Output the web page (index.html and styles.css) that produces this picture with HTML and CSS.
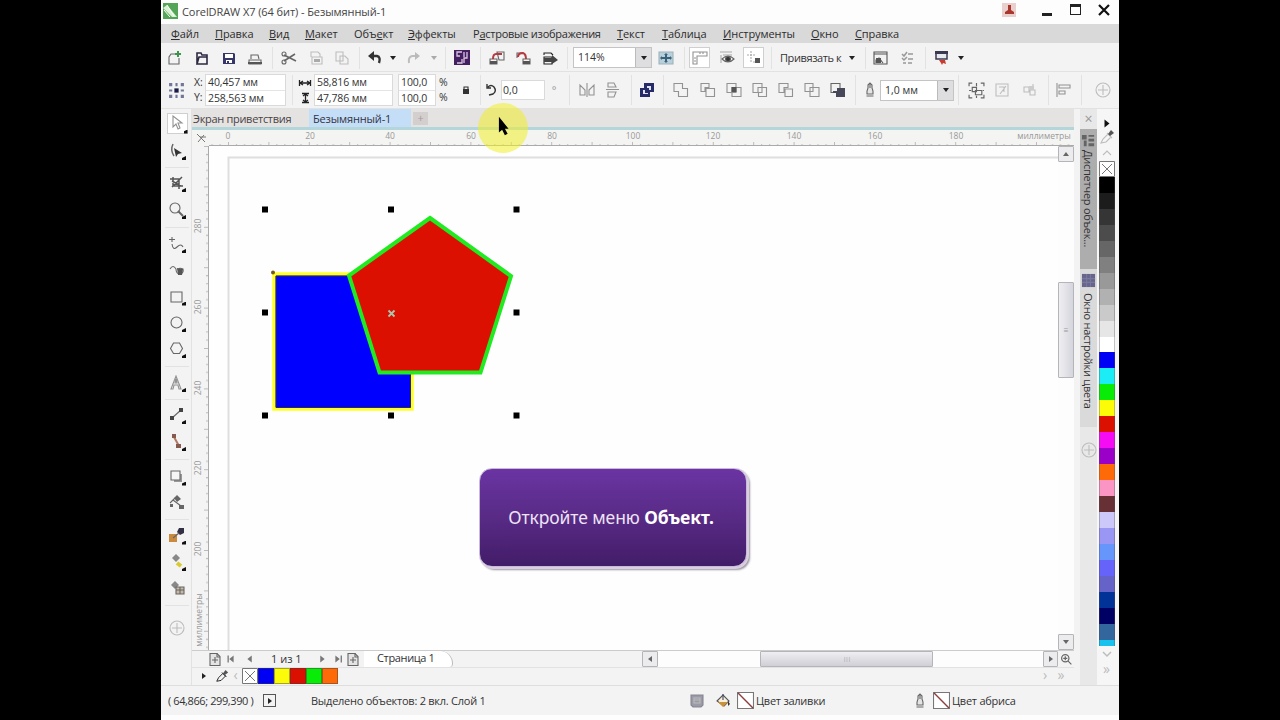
FILE: index.html
```html
<!DOCTYPE html>
<html lang="ru">
<head>
<meta charset="utf-8">
<title>CorelDRAW X7 (64 бит) - Безымянный-1</title>
<link rel="stylesheet" href="styles.css">
</head>
<body>
<svg class="defs" aria-hidden="true">
  <defs>
  <symbol id="weld" viewBox="0 0 16 16"><path d="M1 1.500h8.500v5h5v8h-9v-5h-4.500z"/></symbol>
  <symbol id="trim" viewBox="0 0 16 16"><path d="M1 1.500h8v4h-4v4h-4zM6 6.500h8.500v8h-8.500z"/></symbol>
  <symbol id="intersect" viewBox="0 0 16 16"><path d="M1 1.500h9v9h-9zM6 5.500h9v9h-9z"/><path class="dark" d="M5.500 5h5v5h-5z"/></symbol>
  <symbol id="simplify" viewBox="0 0 16 16"><path d="M1 1.500h9v4h4.500v9h-8v-4h-5.500zM6 5.500h4v5h-4z"/></symbol>
  <symbol id="front" viewBox="0 0 16 16"><path d="M1 1.500h9v4h-4v5h-5zM7 7h7.500v7.500h-7.500z"/></symbol>
  <symbol id="plus" viewBox="0 0 16 16"><circle cx="8" cy="8" r="7"/><path d="M8 3v10M3 8h10"/></symbol>
  <symbol id="pen" viewBox="0 0 16 16"><path class="lite" d="M6 3l2-2 2 2v3l1 3v3h-6v-3l1-3z"/><path d="M4.500 14h7M8 1v5"/></symbol>
  <symbol id="page" viewBox="0 0 16 16"><path class="lite" d="M3 2.500h7l3 3v9h-10z"/><path d="M8 6v6M5 9h6M10 2v4h3"/></symbol>
  <symbol id="dropper" viewBox="0 0 16 16"><path d="M2 14l2-4 5-5 3 3-5 5zM8 4l5 5"/><path class="dark" d="M9 5l3-4 3 3-4 3z"/></symbol>
  <symbol id="poly" viewBox="0 0 16 16"><path d="M4.500 2h6l3 5.500-3 5h-6l-3-5z"/></symbol>
  </defs>
</svg>
<div class="window">
  <header class="titlebar">
    <svg class="logo" viewBox="0 0 16 16"><path fill="#54a557" d="M1 0h15v16h-15z"/><path fill="#d9f2d2" d="M1 5l4-3 10 12h-5z"/><path stroke="#fff" d="M2 7l6 7M5 2l7 11"/></svg>
    <span class="caption">CorelDRAW X7 (64 бит) - Безымянный-1</span>
    <svg class="account" viewBox="0 0 16 16"><path fill="#ead0cc" d="M1 1h14v14h-14z"/><path fill="#aa372d" d="M7 3h3v5l3 2v2h-9v-2l3-2z"/></svg>
    <svg class="winbtns" viewBox="0 0 72 16"><path fill="#222" d="M1 11h10v3h-10zM29 2h11v11h-11zM30 5v7h9v-7z" fill-rule="evenodd"/><path d="M58 3l10 10M68 3l-10 10" stroke="#111" stroke-width="2.200"/></svg>
  </header>

  <nav class="menubar">
    <span><u>Ф</u>айл</span><span><u>П</u>равка</span><span><u>В</u>ид</span><span><u>М</u>акет</span><span>Объ<u>е</u>кт</span><span><u>Э</u>ффекты</span><span class="tight">Р<u>а</u>стровые изображения</span><span><u>Т</u>екст</span><span><u>Т</u>аблица</span><span><u>И</u>нструменты</span><span><u>О</u>кно</span><span><u>С</u>правка</span>
  </nav>

  <div class="toolbar standard">
    <svg class="ic" viewBox="0 0 16 16"><path d="M8 4h-4l-2 3v7h10v-6"/><path d="M11 1v6M8 4h6" stroke="#3c9548" stroke-width="2"/></svg>
    <svg class="ic deep" viewBox="0 0 16 16"><path d="M3 14v-11h4l1 2h5v2M3 14h10v-7h-8z"/></svg>
    <svg class="ic" viewBox="0 0 16 16"><path fill="#37366a" d="M2 3h11l1 1v10h-12z"/><path fill="#fff" d="M4 4h8v4h-8zM5 10h6v3h-6z"/><path fill="#37366a" d="M6 11h2v3h-2z"/></svg>
    <svg class="ic" viewBox="0 0 16 16"><path d="M4 9v-4h7l1 4M2 10h12v4h-12z"/><path class="dark" d="M1 12h14v2h-14z"/></svg>
    <i class="sep"></i>
    <svg class="ic" viewBox="0 0 16 16"><path d="M3 5l12 6M3 11l11-7" stroke-width="1.600"/><circle cx="3" cy="4" r="2"/><circle cx="3" cy="12" r="2"/></svg>
    <svg class="ic pale" viewBox="0 0 16 16"><path d="M3 7v-5h7l2 2v3M4 7h10v7h-10z"/><path d="M6 9h6v3h-6z" fill="#aaa"/></svg>
    <svg class="ic pale" viewBox="0 0 16 16"><path d="M2 2h7v9h-7zM6 6h5l3 3v5h-8z"/></svg>
    <i class="sep"></i>
    <svg class="ic" viewBox="0 0 16 16"><path d="M4 6h6q4 1 2 7" stroke="#333" stroke-width="2.400"/><path fill="#333" d="M1 6l6-5v10z"/></svg>
    <i class="down"></i>
    <svg class="ic pale" viewBox="0 0 16 16"><path d="M12 6h-6q-4 1-3 7" stroke-width="2"/><path fill="#bbb" d="M14 6l-5-4v8z"/></svg>
    <i class="down faint"></i>
    <i class="sep"></i>
    <svg class="ic" viewBox="0 0 16 16"><path fill="#452060" d="M0 0h16v15h-16z"/><path d="M8 2h-5v4h3M8 9v4h-5M10 2v5M13 2v6h-3v5" stroke="#d9c7e6" stroke-width="1.300"/></svg>
    <i class="sep"></i>
    <svg class="ic" viewBox="0 0 16 16"><path d="M1 9h7v5h-7zM8 2h7v8h-5z"/><path d="M13 4h-6q-3 0-3 5" stroke="#b53a42" stroke-width="2"/><path class="dark" d="M1 11h7v3h-7z"/></svg>
    <svg class="ic" viewBox="0 0 16 16"><path d="M2 8v-5h6M8 9h7v5h-7z"/><path d="M3 7q0-4 5-4 3 1 3 6" stroke="#b53a42" stroke-width="2"/><path class="dark" d="M8 11h7v3h-7z"/></svg>
    <svg class="ic" viewBox="0 0 16 16"><path d="M2 5v-2h7l2 2M2 7h8v7h-8z" stroke="#222"/><path fill="#444" d="M2 8h8v-3l6 5-6 4v-2h-8z"/></svg>
    <i class="sep"></i>
    <span class="combo"><b>114%</b><em><i class="down"></i></em></span>
    <svg class="ic" viewBox="0 0 16 16"><path fill="#b8d0db" stroke="#9fb3bb" d="M1 2h14v12h-14z"/><path fill="#3a6278" d="M8 3l2 2h-1v2h3v-1l2 2-2 2v-1h-3v2h1l-2 2-2-2h1v-2h-3v1l-2-2 2-2v1h3v-2h-1z"/></svg>
    <i class="sep"></i>
    <span class="toggle"><svg class="ic mid" viewBox="0 0 16 16"><path d="M1 14v-12h14v4h-10v8zM8 2v2M11 2v2M2 8h2M2 11h2"/></svg></span>
    <svg class="ic" viewBox="0 0 16 16"><path d="M1 2h12M2 5v8M4 5h9" stroke="#aaa"/><path d="M3 9q6-6 12 0-6 6-12 0z"/><circle cx="9" cy="9" r="2.500" fill="#333"/></svg>
    <span class="toggle"><svg class="ic" viewBox="0 0 16 16"><path d="M5 1v12M1 5h9M7 12h6" stroke="#aaa" stroke-dasharray="2 1"/><path class="dark" d="M9 8h5v5h-5z"/></svg></span>
    <i class="sep"></i>
    <span class="snap">Привязать к</span>
    <i class="down"></i>
    <i class="sep"></i>
    <svg class="ic" viewBox="0 0 16 16"><path d="M1 2h13v12h-13zM1 4h13M3 13v-3l3-2 4 5" stroke="#555"/><path class="dark" d="M3 8h5v5h-5z"/></svg>
    <svg class="ic" viewBox="0 0 16 16"><path d="M2 4l2 2 3-4M8 4h5M2 8l2 2 3-3M8 9h5M3 13h3M8 13h4" stroke="#999" stroke-width="1.500"/></svg>
    <i class="sep"></i>
    <svg class="ic" viewBox="0 0 16 16"><path fill="#e8e8f0" stroke="#3b3850" stroke-width="1.500" d="M2 2h11v7h-11z"/><path fill="#3b3850" d="M1 1h13v3h-13z"/><path fill="#c83c30" d="M5 10h6l1 4-3-1-1 2-1-2z"/></svg>
    <i class="down"></i>
  </div>

  <div class="toolbar props">
    <svg class="ic big" viewBox="0 0 16 16"><path fill="#70779a" d="M1 1h3v3h-3zM7 1h2v3h-2zM12 1h3v3h-3zM1 7h3v2h-3zM12 7h3v2h-3zM1 12h3v3h-3zM7 12h2v3h-2zM12 12h3v3h-3z"/><path fill="#151c45" d="M6 6h4v4h-4z"/></svg>
    <span class="pair lab"><b>X:</b><b>Y:</b></span>
    <span class="pair box"><b>40,457 мм</b><b>258,563 мм</b></span>
    <i class="sep"></i>
    <svg class="sizes" viewBox="0 0 15 32"><path fill="none" stroke="#222" stroke-width="1.300" d="M1.500 6v6M12.500 6v6M2 9h10M5 7l-3 2 3 2M9 7l3 2-3 2M4 19.500h7M4 28.500h7M7.500 20v8M5 22l2.500-2 2.500 2M5 26l2.500 2 2.500-2"/></svg>
    <span class="pair box size"><b>58,816 мм</b><b>47,786 мм</b></span>
    <i></i>
    <span class="pair box pct"><b>100,0</b><b>100,0</b></span>
    <span class="pair lab"><b>%</b><b>%</b></span>
    <svg class="ic" viewBox="0 0 16 16"><path d="M6 8v-3h4v3" stroke="#333"/><path fill="#333" d="M5 7h6v5h-6z"/></svg>
    <i class="sep"></i>
    <svg class="ic" viewBox="0 0 16 16"><path d="M5 5q3-3 6 0 3 4-1 7l-4 1M4 2v4h4" stroke="#333" stroke-width="1.400"/></svg>
    <span class="angle">0,0</span>
    <span class="degree">°</span>
    <i class="sep"></i>
    <svg class="ic mid" viewBox="0 0 16 16"><path d="M1 3v10h5v-5zM8 1v14M10 8l5-5v10h-5z"/></svg>
    <svg class="ic mid" viewBox="0 0 16 16"><path d="M3 1h6l2 4h-8zM1 7.500h13M3 10h8l-2 5h-6z"/></svg>
    <i class="sep"></i>
    <svg class="ic" viewBox="0 0 16 16"><path fill="#252c67" d="M5 1h10v9h-4v5h-10v-9h4z"/><path fill="#dfe2f2" d="M8 4h4v4h-2v-2h-2zM4 8h2v3h3v1h-5z"/></svg>
    <i class="sep"></i>
    <svg class="ic mid"><use href="#weld"/></svg>
    <svg class="ic mid"><use href="#trim"/></svg>
    <svg class="ic mid"><use href="#intersect"/></svg>
    <svg class="ic mid"><use href="#simplify"/></svg>
    <svg class="ic mid"><use href="#front"/></svg>
    <svg class="ic mid" viewBox="0 0 16 16"><path d="M1 1.500h8v8h-8zM6 5.500h9v9h-9z"/></svg>
    <svg class="ic" viewBox="0 0 16 16"><path d="M1 1.500h9v9h-9z"/><path fill="#47475a" d="M7 6h8v9h-9v-4h-3v-2h4z"/></svg>
    <i class="sep"></i>
    <svg class="ic"><use href="#pen"/></svg>
    <span class="combo outline"><b>1,0 мм</b><em><i class="down"></i></em></span>
    <i class="sep"></i>
    <svg class="ic big" viewBox="0 0 16 16"><path d="M1 4v-3h3M12 1h3v3M15 12v3h-3M4 15h-3v-3M4 5h4v4h-4zM7 8h6v4h-6zM1 8h2M8 1v3M14 8h1M8 13v2" stroke="#666"/></svg>
    <svg class="ic pale" viewBox="0 0 16 16"><path d="M2 2h12v12h-12zM5 5h5v5M6 12l6-8"/></svg>
    <svg class="ic pale" viewBox="0 0 16 16"><path d="M2 5h5v5h-5zM8 8h5v5h-5zM11 2v4"/><path fill="#ccc" d="M7 4h5v4h-5z"/></svg>
    <i class="sep"></i>
    <svg class="ic mid" viewBox="0 0 16 16"><path d="M2 1v14M4 3h11v3h-11zM4 9h6v3h-6z"/></svg>
    <i class="sep"></i>
    <svg class="ic pale"><use href="#plus"/></svg>
  </div>

  <main class="work">
    <aside class="toolbox">
      <span class="toggle fly"><svg class="ic mid" viewBox="0 0 16 16"><path d="M4 1v11l3-3 2 5 2-1-2-5h4z"/></svg></span>
      <span class="fly"><svg class="ic" viewBox="0 0 16 16"><path d="M4 1q-3 6 1 12" stroke-width="1.500"/><path fill="#333" d="M5 5l8 5-4 1-2 3z"/></svg></span>
      <i class="hsep"></i>
      <span class="fly"><svg class="ic" viewBox="0 0 16 16"><path d="M4 2v9h10M1 4h9v10M3 12l10-10M3 6l9 5" stroke="#555" stroke-width="1.500"/></svg></span>
      <span class="fly"><svg class="ic" viewBox="0 0 16 16"><circle cx="6" cy="6" r="5"/><path d="M9 9l5 5" stroke-width="2"/></svg></span>
      <i class="hsep"></i>
      <span class="fly"><svg class="ic" viewBox="0 0 16 16"><path d="M3 1v5M0 3.500h6M3 8q1 7 5 3t6 0"/></svg></span>
      <span><svg class="ic" viewBox="0 0 16 16"><path d="M1 7q3-5 6 0 0 5 4 5 4-1 3-5-4-2-5 1"/><path class="dark" d="M8 6l6 1-1 6h-4z"/></svg></span>
      <span class="fly"><svg class="ic" viewBox="0 0 16 16"><path d="M2 3h11v10h-11z"/></svg></span>
      <span class="fly"><svg class="ic" viewBox="0 0 16 16"><circle cx="7.500" cy="7.500" r="5.500"/></svg></span>
      <span class="fly"><svg class="ic"><use href="#poly"/></svg></span>
      <i class="hsep"></i>
      <span class="fly"><svg class="ic mid" viewBox="0 0 16 16"><path d="M2 14l5-13 5 13h-2l-1-4h-4l-1 4zM6 8h2l-1-4z"/></svg></span>
      <i class="hsep"></i>
      <span class="fly"><svg class="ic" viewBox="0 0 16 16"><path d="M3 11l9-8"/><path fill="#444" d="M1 9h4v4h-4zM10 1h4v4h-4z"/></svg></span>
      <span class="fly"><svg class="ic" viewBox="0 0 16 16"><path d="M5 3l5 9" stroke="#b37863" stroke-width="2"/><path fill="#865b4e" d="M3 0h4v4h-4zM7 10h5v4h-5z"/></svg></span>
      <i class="hsep"></i>
      <span class="fly"><svg class="ic" viewBox="0 0 16 16"><path fill="#999" d="M5 5h8v8h-8z"/><path fill="#f5f5f5" stroke="#666" d="M2 2h9v9h-9z"/></svg></span>
      <span><svg class="ic" viewBox="0 0 16 16"><path d="M1 8l5-5M4 5l8 6"/><path fill="#666" d="M5 3l3-3 4 4-4 3zM10 10h5v4h-5zM1 9h3v3h-3z"/></svg></span>
      <i class="hsep"></i>
      <span class="fly"><svg class="ic" viewBox="0 0 16 16"><path fill="#c98a3e" d="M0 6h8v8h-8z"/><path fill="#343043" d="M8 4l2-4h5v5l-4 2z"/><path d="M4 10l6-5"/></svg></span>
      <span class="fly"><svg class="ic" viewBox="0 0 16 16"><path fill="#888" d="M3 4l4-4 4 4-4 4z"/><path d="M8 9l4 3" stroke="#d9cb2e" stroke-width="4"/></svg></span>
      <span><svg class="ic" viewBox="0 0 16 16"><path fill="#888" d="M2 5l4-4 4 4-4 4z"/><path fill="#c7b9a4" d="M7 7h8v7h-8z"/><path d="M7 7h8v7h-8zM7 10h8M11 7v7"/></svg></span>
      <i class="hsep"></i>
      <span><svg class="ic pale"><use href="#plus"/></svg></span>
    </aside>

    <section class="document">
      <div class="tabs"><span>Экран приветствия</span><span class="active">Безымянный-1</span><span class="add">+</span></div>
      <svg class="hruler" viewBox="192 130 882 16">
        <defs><pattern id="ht" x="228" y="130" width="40.400" height="16" patternUnits="userSpaceOnUse"><path d="M.5 12v4M8.500 14v2M16.500 14v2M24.500 14v2M32.500 14v2" stroke="#bbb"/></pattern></defs>
        <rect x="209" y="130" width="865" height="16" fill="url(#ht)"/>
        <path d="M209 145.500h865" stroke="#aaa"/>
        <path d="M197 134l8 8M198 142l6-7M200 137h6" stroke="#777" fill="none"/>
        <g class="ticks"><text x="228" y="139">0</text><text x="310" y="139">20</text><text x="390" y="139">40</text><text x="471" y="139">60</text><text x="552" y="139">80</text><text x="633" y="139">100</text><text x="713" y="139">120</text><text x="794" y="139">140</text><text x="875" y="139">160</text><text x="956" y="139">180</text><text x="1044" y="139">миллиметры</text></g>
      </svg>
      <div class="mid-row">
        <svg class="vruler" viewBox="192 146 17 504">
          <defs><pattern id="vt" x="192" y="146" width="17" height="40.400" patternUnits="userSpaceOnUse"><path d="M12 .5h5M14 8.500h3M14 16.500h3M14 24.500h3M14 32.500h3" stroke="#bbb"/></pattern></defs>
          <rect x="192" y="146" width="17" height="504" fill="url(#vt)"/>
          <path d="M208.500 146v504" stroke="#aaa"/>
          <g class="ticks"><text transform="translate(201 226) rotate(-90)">280</text><text transform="translate(201 307) rotate(-90)">260</text><text transform="translate(201 388) rotate(-90)">240</text><text transform="translate(201 468) rotate(-90)">220</text><text transform="translate(201 549) rotate(-90)">200</text><text transform="translate(202 620) rotate(-90)">миллиметры</text></g>
        </svg>
        <svg class="canvas" viewBox="209 146 849 504">
          <path d="M1058 157.500h-829.500v492.500" fill="none" stroke="#dedede" stroke-width="2"/>
          <path d="M274 274h138v135h-138z" fill="#00f" stroke="#ffff28" stroke-width="3.500"/>
          <path d="M276 276h134.500v131.500h-134.500z" fill="#00f" stroke="#2a2a50"/>
          <path d="M430 218l81 58-30.500 96.500h-101l-30.500-97z" fill="#dc1000" stroke="#20ea20" stroke-width="4"/>
          <path d="M262 206.500h6v6h-6zM388 206.500h6v6h-6zM513.500 206.500h6v6h-6zM262 309.500h6v6h-6zM513.500 309.500h6v6h-6zM262 412.500h6v6h-6zM388 412.500h6v6h-6zM513.500 412.500h6v6h-6z" fill="#000"/>
          <path d="M388.500 310.500l6 6M394.500 310.500l-6 6" stroke="#a8c8b0" stroke-width="1.800"/>
          <circle cx="273" cy="272.500" r="2" fill="#76581c"/>
        </svg>
        <div class="vscroll"><em><i class="down up"></i></em><em class="thumb">≡</em><em><i class="down"></i></em></div>
      </div>
      <div class="pagebar">
        <svg class="ic"><use href="#page"/></svg>
        <svg class="ic nav" viewBox="0 0 16 16"><path fill="#777" d="M4 4h1.500v8h-1.500zM11 4v8l-5-4z"/></svg>
        <svg class="ic nav" viewBox="0 0 16 16"><path fill="#777" d="M10 4v8l-5-4z"/></svg>
        <span>1 из 1</span>
        <svg class="ic nav" viewBox="0 0 16 16"><path fill="#777" d="M6 4v8l5-4z"/></svg>
        <svg class="ic nav" viewBox="0 0 16 16"><path fill="#777" d="M11 4h1.500v8h-1.500zM5 4v8l5-4z"/></svg>
        <svg class="ic"><use href="#page"/></svg>
        <span class="pagetab">Страница 1</span>
        <i></i>
        <em><i class="down left"></i></em>
        <i class="track"></i>
        <em class="thumb">|||</em>
        <i class="track"></i>
        <em><i class="down right"></i></em>
        <svg class="ic zoom" viewBox="0 0 16 16"><circle cx="6.500" cy="6.500" r="4.500"/><path d="M10 10l4 4M4 6.500h5M6.500 4v5" stroke-width="1.500"/></svg>
      </div>
      <div class="docpal">
        <i class="down right"></i>
        <svg class="ic"><use href="#dropper"/></svg>
        <s>‹</s>
        <svg class="nofill" viewBox="0 0 16 16"><path d="M.5 .5h15v15h-15zM3 3l10 10M13 3l-10 10"/></svg>
        <b class="c-blue"></b><b class="c-yellow"></b><b class="c-red"></b><b class="c-green"></b><b class="c-orange"></b>
        <i></i><s>›</s><s>»</s>
      </div>
    </section>

    <aside class="dockers">
      <span class="close">×</span>
      <span class="dock on"><svg class="ic" viewBox="0 0 16 16"><path fill="#646464" d="M1 2h5v5h-5zM8 2h6v2h-6zM8 6h6v3h-6zM3 8h3v6h-3zM8 11h6v3h-6z"/></svg><b>Диспетчер объек...</b></span>
      <span class="dock"><svg class="ic" viewBox="0 0 16 16"><path fill="#67658c" d="M1 1h14v14h-14z"/><path d="M1 6h14M1 10h14M6 1v14M10 1v14" stroke="#7a789c"/></svg><b>Окно настройки цвета</b></span>
      <svg class="ic pale"><use href="#plus"/></svg>
    </aside>

    <aside class="palette">
      <i class="down right"></i>
      <svg class="ic pale"><use href="#dropper"/></svg>
      <svg class="ic pale chev" viewBox="0 0 16 16"><path d="M4 10l4-4 4 4"/></svg>
      <svg class="nofill" viewBox="0 0 16 16"><path d="M.5 .5h15v15h-15zM3 3l10 10M13 3l-10 10"/></svg>
      <b class="k100"></b><b class="k90"></b><b class="k80"></b><b class="k70"></b><b class="k60"></b><b class="k50"></b><b class="k40"></b><b class="k30"></b><b class="k20"></b><b class="k10"></b><b class="k0"></b>
      <b class="c-blue"></b><b class="c-cyan"></b><b class="c-green"></b><b class="c-yellow"></b><b class="c-red"></b><b class="c-magenta"></b><b class="c-purple"></b><b class="c-orange"></b><b class="c-pink"></b><b class="c-brown"></b><b class="c-lavender"></b><b class="c-peri"></b><b class="c-sky"></b><b class="c-iris"></b><b class="c-slate"></b><b class="c-royal"></b><b class="c-navy"></b><b class="c-steel"></b><b class="c-aqua"></b>
      <svg class="ic pale" viewBox="0 0 16 16"><path d="M4 6l4 4 4-4" stroke-width="1.500"/></svg>
      <s>»</s>
    </aside>
  </main>

  <footer class="status">
    <span class="coords">( 64,866; 299,390 )</span>
    <span class="play"><i class="down right"></i></span>
    <span class="info">Выделено объектов: 2 вкл. Слой 1</span>
    <svg class="ic" viewBox="0 0 16 16"><path fill="#9b9ba8" stroke="#858590" d="M2 2h12v10l-2 2h-8l-2-2z"/><path d="M5 5h6v5h-6zM5 7h6" stroke="#bbb"/></svg>
    <svg class="ic" viewBox="0 0 16 16"><path fill="#f7f0db" stroke="#555" d="M2 8l6-6 6 6-5 5z"/><path fill="#c9923b" d="M3 9h10l-5 5z"/><path d="M8 1v6" stroke="#446"/><path fill="#333" d="M13 8l2 3-2 2z"/></svg>
    <svg class="none" viewBox="0 0 16 16"><path fill="#fff" stroke="#777" d="M.5 .5h15v15h-15z"/><path d="M1 1l14 14" stroke="#8e3b3b" stroke-width="1.300"/></svg>
    <span>Цвет заливки</span>
    <svg class="ic"><use href="#pen"/></svg>
    <svg class="none" viewBox="0 0 16 16"><path fill="#fff" stroke="#777" d="M.5 .5h15v15h-15z"/><path d="M1 1l14 14" stroke="#8e3b3b" stroke-width="1.300"/></svg>
    <span>Цвет абриса</span>
  </footer>

  <div class="callout"><p>Откройте меню <strong>Объект.</strong></p></div>
  <div class="halo"><svg viewBox="0 0 12 20"><path d="M1 0v17l3.500-3 3 6 3-1.500-3-5.500h4z"/></svg></div>
</div>
</body>
</html>
```
FILE: styles.css
```css
* { box-sizing: border-box; }
body { margin: 0; background: #000; overflow: hidden; }
.defs { position: absolute; width: 0; height: 0; }
b, em, i, s { font-style: normal; font-weight: normal; text-decoration: none; }

.window {
  position: relative;
  width: 958px; height: 720px; margin-left: 161px;
  display: flex; flex-direction: column;
  background: #fdfdfd; color: #333;
  font: 11px/14px "Open Sans", "Noto Sans", sans-serif;
  white-space: nowrap;
}

/* icons */
.ic { width: 16px; height: 16px; fill: none; stroke: #666; stroke-width: 1.1; flex: none; justify-self: center; }
.ic path[fill]:not([stroke]) { stroke: none; }
.ic .dark, .dark { fill: #555; stroke: none; }
.lite { fill: #e4e4e4; }
.ic.pale { stroke: #bdbdbd; }
.ic.pale .dark { fill: #bbb; }
.ic.mid { stroke: #929292; }
.ic.deep { stroke: #2b2940; stroke-width: 1.6; }
.sep { width: 1px; height: 22px; background: #e2e2e2; justify-self: center; }
.down { width: 0; height: 0; border: 3px solid transparent; border-top: 4px solid #222; border-bottom: 0; justify-self: center; }
.down.faint { border-top-color: #aaa; }
.down.up { transform: rotate(180deg); }
.down.left { transform: rotate(90deg); }
.down.right { transform: rotate(-90deg); }
.vscroll .down, .pagebar .down { border-top-color: #666; }

/* title and menu */
.titlebar { height: 24px; display: flex; align-items: center; }
.logo { width: 16px; height: 16px; margin: 0 4px 2px 1px; fill: none; }
.caption { font-size: 11px; letter-spacing: -.08px; flex: 1; color: #444; }
.account { width: 16px; height: 16px; margin: 0 24px 4px 0; }
.winbtns { width: 72px; height: 16px; margin: 0 6px 4px 0; }
.menubar {
  height: 19px; padding-left: 10px; background: #d9d9d9; align-items: center; letter-spacing: -.08px; color: #2c2c2c;
  display: grid; grid-template-columns: 44px 54px 36px 49px 54px 65px 144px 45px 61px 88px 44px 60px;
}
.menubar u { text-underline-offset: 1px; }
.menubar .tight { letter-spacing: -.25px; }

/* toolbars */
.toolbar { display: grid; align-items: center; background: #f3f3f3; border-bottom: 1px solid #e2e2e2; }
.standard {
  height: 29px; padding-top: 1px;
  grid-template-columns: 27px 27px 27px 26px 8px 26px 27px 25px 10px 22px 14px 28px 12px 10px 24px 12px 21px 31px 23px 12px 79px 28px 8px 23px 31px 23px 13px 66px 16px 10px 22px 32px 2px 32px 6px;
}
.props {
  height: 37px;
  grid-template-columns: 30px 14px 81px 12px 16px 79px 5px 38px 17px 26px 2px 20px 44px 18px 13px 22px 30px 7px 24px 8px 28px 25px 27px 26px 26px 26px 26px 9px 20px 74px 9px 26px 26px 30px 6px 24px 12px 32px;
}
.props .sep { height: 30px; }
.combo { height: 21px; display: flex; align-items: stretch; background: #fff; border: 1px solid #c4c4c4; font-size: 10.5px; line-height: 19px; }
.combo b { flex: 1; padding-left: 4px; }
.combo em { width: 16px; display: flex; align-items: center; justify-content: center; background: #dedee0; border-left: 1px solid #bbb; }
.toggle { width: 21px; height: 21px; display: grid; place-items: center; background: #fff; border: 1px solid #cfcfcf; justify-self: center; }
.snap { padding-left: 2px; letter-spacing: -.4px; }
.ic.big { width: 17px; height: 17px; }
.pair { display: grid; grid-template-rows: 15px 15px; line-height: 15px; font-size: 10.5px; }
.lab b { padding-left: 3px; }
.box { background: #fff; border: 1px solid #dadada; height: 32px; letter-spacing: -.1px; }
.box b { padding-left: 2px; }
.box b + b { border-top: 1px solid #e4e4e4; line-height: 14px; }
.sizes { width: 15px; height: 32px; }
.box.pct b { padding-left: 2px; }
.angle { height: 20px; background: #fff; border: 1px solid #dadada; line-height: 19px; padding-left: 1px; font-size: 10.5px; }
.degree { text-align: center; color: #999; }

/* work area */
.work { height: 577px; display: grid; grid-template-columns: 31px 882px 6px 17px 1fr; background: #f3f3f3; border-bottom: 1px solid #dedede; }
.toolbox {
  border-right: 1px solid #e2e2e2; display: grid; justify-items: center; align-items: center; align-content: start; margin-top: -1px; padding-left: 2px;
  grid-template-rows: 30px 26px 6px 26px 28px 7px 26px 26px 27px 26px 26px 8px 26px 6px 26px 28px 7px 27px 26px 6px 27px 26px 26px 8px 38px;
}
.toolbox span { display: grid; }
.toolbox .fly::after { content: ""; grid-area: 1/1; width: 4px; height: 4px; background: #111; align-self: end; justify-self: end; clip-path: polygon(100% 0, 100% 100%, 0 100%, 0 50%); margin: 0 -1px -1px 0; }
.toolbox .fly .ic { grid-area: 1/1; }
.hsep { width: 24px; height: 1px; background: #e2e2e2; }

.document { display: grid; grid-template-rows: 21px 16px 504px 17px 18px; min-width: 0; }
.tabs { display: flex; background: #e5e2e2; border-bottom: 3px solid #b3d6da; line-height: 20px; color: #4a4444; letter-spacing: -.2px; }
.tabs span { width: 117px; padding-left: 1px; letter-spacing: -.3px; }
.tabs .active { width: 102px; padding-left: 4px; background: #c5def8; color: #334; letter-spacing: -.15px; }
.tabs .add { width: 15px; height: 13px; margin: 3px 0 0 2px; padding: 0; background: #d4cfcf; color: #a99; text-align: center; line-height: 12px; }
.hruler { width: 882px; height: 16px; background: #f4f4f2; }
.ticks { font-size: 8.5px; fill: #999; text-anchor: middle; }
.mid-row { display: grid; grid-template-columns: 17px 849px 16px; }
.vruler { width: 17px; height: 504px; background: #f4f4f4; }
.canvas { width: 849px; height: 504px; background: #fefefe; }
.vscroll { display: grid; grid-template-rows: 16px 120px 96px 256px 16px; background: #fdfdfd; }
.vscroll .thumb { grid-row: 3; }
.vscroll em:last-child { grid-row: 5; }
.vscroll em, .pagebar em { display: flex; align-items: center; justify-content: center; background: #ececee; border: 1px solid #b5b5b9; border-radius: 1px; color: #999; font-size: 8px; }
.vscroll .thumb { background: linear-gradient(90deg, #efeff2, #d5d5de); }
.pagebar .thumb { background: linear-gradient(#efeff2, #cfcfd6); letter-spacing: -1px; font-size: 6px; }
.pagebar {
  padding-left: 14px; align-items: center; border-top: 1px solid #ccc;
  display: grid; grid-template-columns: 17px 16px 21px 54px 16px 15px 15px 93px 189px 16px 102px 173px 110px 15px 16px;
}
.pagebar > span { padding-left: 11px; }
.pagebar .pagetab { height: 16px; line-height: 14px; padding-left: 13px; background: #fff; border-right: 1px solid #bbb; border-radius: 0 14px 4px 0; margin-left: 4px; letter-spacing: -.35px; }
.pagebar .nav { width: 14px; height: 14px; }
.pagebar .zoom { width: 13px; height: 13px; stroke-width: 1.5; }
.pagebar em { height: 16px; }
.track { height: 16px; background: #fdfdfd; }
.docpal { display: grid; grid-template-columns: 22px 14px 13px 16px repeat(5, 16px) 699px 16px 16px; align-items: start; padding-left: 1px; border-top: 1px solid #e2e2e2; }
.docpal .down { margin-top: 6px; }
.docpal .ic { width: 14px; height: 14px; margin-top: 1px; stroke: #222; }
.docpal b { width: 16px; height: 16px; border: 1px solid rgba(60, 60, 60, .45); }
.docpal s, .palette s { color: #bbb; font-size: 14px; text-align: center; }
.nofill { width: 16px; height: 16px; fill: #fff; stroke: #777; }

/* dockers */
.dockers { grid-column: 4; background: #e8e8e8; display: grid; grid-template-rows: 20px 140px 158px 46px; justify-items: center; align-items: center; align-content: start; }
.close { color: #999; font-size: 14px; }
.dock { width: 17px; height: 100%; display: flex; flex-direction: column; align-items: center; gap: 5px; padding-top: 4px; background: #dadada; }
.dock.on { background: #adadad; gap: 2px; }
.dock .ic { width: 15px; height: 15px; }
.dock b { writing-mode: vertical-rl; line-height: 15px; letter-spacing: -.25px; }

/* colour swatches */
.palette { background: #f6f6f6; padding-left: 2px; display: flex; flex-direction: column; align-items: flex-start; }
.palette .down { margin: 13px 0 3px 5px; flex: none; }
.palette .down { border-width: 5px 4px 0; border-top-color: #111; margin: 12px 0 3px 4px; }
.palette .ic { margin-left: 0; height: 16px; }
.palette .nofill { flex: none; }
.palette b { width: 16px; height: 15.96px; flex: none; border: solid rgba(80, 80, 80, .35); border-width: 0 1px; }
.palette s { padding-left: 4px; }
.k100 { background: #000; } .k90 { background: #1c1c1c; } .k80 { background: #353535; } .k70 { background: #4c4c4c; }
.k60 { background: #666; } .k50 { background: #808080; } .k40 { background: #999; } .k30 { background: #b1b1b1; }
.k20 { background: #cacaca; } .k10 { background: #e6e6e6; } .k0 { background: #fff; }
.c-blue { background: #0000f5; } .c-cyan { background: #1cecf5; } .c-green { background: #08ec08; } .c-yellow { background: #fcfc08; }
.c-red { background: #dc1000; } .c-magenta { background: #f50cf5; } .c-purple { background: #9a00c8; } .c-orange { background: #ff6a08; }
.c-pink { background: #fb96c4; } .c-brown { background: #663034; } .c-lavender { background: #ccc8fa; } .c-peri { background: #9996f4; }
.c-sky { background: #6696fc; } .c-iris { background: #6663fa; } .c-slate { background: #6663c8; } .c-royal { background: #003298; }
.c-navy { background: #000064; } .c-steel { background: #33669c; }
.palette .c-aqua { background: #18c2ee; height: 6px; }

/* status */
.status {
  height: 29px; background: #f3f3f3; align-items: center; letter-spacing: -.25px;
  display: grid; grid-template-columns: 95px 48px 378px 26px 22px 19px 156px 21px 19px 1fr; padding-left: 7px;
}
.coords { letter-spacing: -.4px; }
.play { width: 13px; height: 13px; border: 1px solid #555; display: grid; place-items: center; }
.status .ic, .status .none { justify-self: start; }
.none { width: 17px; height: 17px; }

/* tutorial overlay */
.callout {
  position: absolute; left: 318px; top: 468px; width: 268px; height: 99px;
  display: grid; place-items: center; border: 1px solid #c9b8dc; border-radius: 13px;
  background: linear-gradient(#6a34a3, #5a2c88 45%, #421c68);
  box-shadow: 1px 1px 0 1px #d8d0e0, 3px 3px 2px #9c96a2; color: #eee4f8;
}
.callout p { margin: 0 4px 2px 0; font: 17.5px/24px "Noto Sans", "Open Sans", sans-serif; letter-spacing: -.08px; }
.callout strong { color: #fff; }
.halo { position: absolute; left: 317px; top: 103px; width: 50px; height: 50px; border-radius: 50%; background: rgba(240, 238, 40, .55); display: grid; place-items: center; }
.halo svg { width: 11px; height: 20px; margin-bottom: 4px; }
```
